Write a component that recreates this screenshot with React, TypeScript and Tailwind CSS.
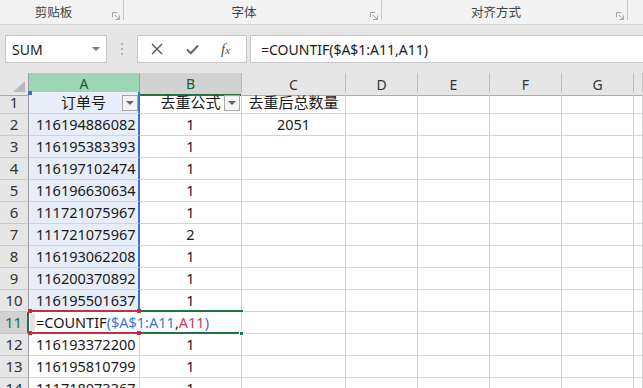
import React from "react";

const data: [string, string, string][] = [
  ["116194886082", "1", "2051"],
  ["116195383393", "1", ""],
  ["116197102474", "1", ""],
  ["116196630634", "1", ""],
  ["111721075967", "1", ""],
  ["111721075967", "2", ""],
  ["116193062208", "1", ""],
  ["116200370892", "1", ""],
  ["116195501637", "1", ""],
];

const after: [string, string][] = [
  ["116193372200", "1"],
  ["116195810799", "1"],
  ["111718073367", "1"],
];

const cols = "grid grid-cols-[29px_111px_102px_104px_72px_72px_72px_72px_1fr]";

const Launcher = () => (
  <svg width="8" height="8" viewBox="0 0 8 8" className="absolute right-[3px] bottom-[4px]" fill="none" stroke="#a3a3a3" strokeWidth="1">
    <path d="M0.5 5V0.5H5" />
    <path d="M2.5 2.5L7 7" />
    <path d="M7.5 3.5V7.5H3.5" />
  </svg>
);

const FilterBtn = ({ right }: { right: string }) => (
  <div className={`absolute top-[3px] ${right} w-[16px] h-[16px] border border-[#a6a6a6] bg-[#f3f3f3] flex items-center justify-center`}>
    <svg width="8" height="4" viewBox="0 0 8 4">
      <path d="M0 0H8L4 4Z" fill="#666" />
    </svg>
  </div>
);

const RowHead = ({ n, active }: { n: number; active?: boolean }) => (
  <div
    className={
      active
        ? "h-[22px] bg-[#d2d2d2] border-r-2 border-r-[#217346] border-b border-b-[#c6c6c6] flex items-center justify-center text-[15px] text-[#217346]"
        : "h-[22px] bg-[#e6e6e6] border-r border-r-[#9e9e9e] border-b border-b-[#c9c9c9] flex items-center justify-center text-[15px] text-[#333]"
    }
  >
    {n}
  </div>
);

const Blank = () => <div className="h-[22px] border-r border-b border-[#d4d4d4]" />;

export default function App() {
  return (
    <div className="w-[643px] h-[388px] overflow-hidden bg-white font-['Noto_Sans','Noto_Sans_CJK_SC',sans-serif] text-[#1a1a1a]">
      {/* ribbon group labels */}
      <div className="h-[25px] flex bg-[#f3f3f3] border-b border-[#d6d6d6] text-[12.5px] text-[#444]">
        <div className="relative w-[123px] flex items-center justify-center pr-[16px] pt-[3px]">
          剪贴板
          <Launcher />
        </div>
        <div className="w-px h-[20px] bg-[#c8c8c8]" />
        <div className="relative w-[257px] flex items-center justify-center pr-[17px] pt-[3px]">
          字体
          <Launcher />
        </div>
        <div className="w-px h-[20px] bg-[#c8c8c8]" />
        <div className="relative w-[245px] flex items-center justify-center pr-[17px] pt-[3px]">
          对齐方式
          <Launcher />
        </div>
        <div className="w-px h-[20px] bg-[#c8c8c8]" />
      </div>

      {/* formula bar */}
      <div className="h-[48px] bg-[#e6e6e6] flex items-start pt-[10px]">
        <div className="ml-[5px] w-[102px] h-[28px] bg-white border border-[#c6c6c6] flex items-center justify-between pl-[6px] pr-[6px] text-[14px]">
          <span>SUM</span>
          <svg width="8" height="4" viewBox="0 0 8 4">
            <path d="M0 0H8L4 4Z" fill="#7a7a7a" />
          </svg>
        </div>
        <div className="w-[30px] h-[28px] flex flex-col items-center justify-center gap-[3px]">
          <span className="w-[2px] h-[2px] bg-[#b0b0b0]" />
          <span className="w-[2px] h-[2px] bg-[#b0b0b0]" />
          <span className="w-[2px] h-[2px] bg-[#b0b0b0]" />
        </div>
        <div className="w-[110px] h-[28px] bg-white border border-[#c6c6c6] flex items-center">
          <svg width="12" height="12" viewBox="0 0 12 12" className="ml-[13px]" stroke="#555" strokeWidth="1.4">
            <path d="M1 1L11 11M11 1L1 11" />
          </svg>
          <svg width="13" height="11" viewBox="0 0 13 11" className="ml-[23px]" fill="none" stroke="#666" strokeWidth="2">
            <path d="M1 5.5L4.8 9.2L12 1.5" />
          </svg>
          <span className="ml-[22px] italic font-['Liberation_Serif',serif] text-[15px] text-[#555] leading-none">
            f<span className="text-[11px]">x</span>
          </span>
        </div>
        <div className="ml-[3px] flex-1 h-[28px] bg-white border border-[#c6c6c6] border-r-0 flex items-center pl-[10px] text-[14px]">
          =COUNTIF($A$1:A11,A11)
        </div>
      </div>

      {/* column headers */}
      <div className={`${cols} h-[19px]`}>
        <div className="relative bg-[#e6e6e6] border-r border-r-[#9e9e9e] border-b border-b-[#ababab]">
          <svg width="12" height="11" viewBox="0 0 12 11" className="absolute right-[3px] bottom-[3px]">
            <path d="M12 0V11H0Z" fill="#b9b9b9" />
          </svg>
        </div>
        <div className="bg-[#9fd5b7] border-r border-r-[#9e9e9e] border-b-2 border-b-[#217346] flex items-center justify-center text-[14px] text-[#1d5a37]">A</div>
        <div className="bg-[#d2d2d2] border-r border-r-[#b5b5b5] border-b-2 border-b-[#217346] flex items-center justify-center text-[14px] text-[#1d5a37]">B</div>
        {["C", "D", "E", "F", "G", ""].map((c, i) => (
          <div key={i} className="bg-[#e6e6e6] border-r border-r-[#c0c0c0] border-b border-b-[#ababab] flex items-center justify-center text-[14px] text-[#333]">
            {c}
          </div>
        ))}
      </div>

      {/* row 1 */}
      <div className={cols}>
        <RowHead n={1} />
        <div className="relative h-[22px] bg-[#e8eef9] border-r-2 border-r-[#3f71c8] border-b border-b-[#d4d4d4] flex items-center justify-center text-[15px]">
          <span className="absolute -left-[1px] -top-[1px] w-[4px] h-[4px] bg-[#3f71c8]" />
          订单号
          <FilterBtn right="right-0" />
        </div>
        <div className="relative h-[22px] border-r border-b border-[#d4d4d4] flex items-center justify-center text-[15px]">
          去重公式
          <FilterBtn right="right-[1px]" />
        </div>
        <div className="h-[22px] border-r border-b border-[#d4d4d4] flex items-center justify-center text-[15px]">去重后总数量</div>
        <Blank />
        <Blank />
        <Blank />
        <Blank />
        <Blank />
      </div>

      {data.map((r, i) => (
        <div key={i} className={cols}>
          <RowHead n={i + 2} />
          <div className="h-[22px] bg-[#e8eef9] border-r-2 border-r-[#3f71c8] border-b border-b-[#d4d4d4] flex items-center pl-[7px] text-[14.5px]">
            {r[0]}
          </div>
          <div className="h-[22px] border-r border-b border-[#d4d4d4] flex items-center justify-center text-[14.5px]">{r[1]}</div>
          <div className="h-[22px] border-r border-b border-[#d4d4d4] flex items-center justify-center text-[14.5px]">{r[2]}</div>
          <Blank />
          <Blank />
          <Blank />
          <Blank />
          <Blank />
        </div>
      ))}

      {/* row 11 - editing */}
      <div className={cols}>
        <RowHead n={11} active />
        <div className="relative col-span-2 h-[22px] border-r border-b border-[#d4d4d4] flex items-center pl-[7px] text-[14.5px]">
          <span className="absolute left-[1px] top-[2px] w-[5px] h-[17px] bg-[#ecdfe5]" />
          <span className="relative">
            =COUNTIF<span className="text-[#3b78d6]">($A$1:A11</span>,<span className="text-[#d23a52]">A11</span>
            <span className="text-[#5a5ec9]">)</span>
          </span>
          <span className="absolute left-0 -top-[2px] w-[111px] h-[2px] bg-[#c0313f]" />
          <span className="absolute left-0 bottom-[-1px] w-[111px] h-[2px] bg-[#c0313f]" />
          <span className="absolute -left-[1px] -top-[3px] w-[4px] h-[4px] bg-[#c0313f]" />
          <span className="absolute left-[108px] -top-[3px] w-[4px] h-[4px] bg-[#c0313f]" />
          <span className="absolute -left-[1px] bottom-[-2px] w-[4px] h-[4px] bg-[#c0313f]" />
          <span className="absolute left-[108px] bottom-[-2px] w-[4px] h-[4px] bg-[#c0313f]" />
          <span className="absolute left-[112px] -top-[2px] w-[102px] h-[2px] bg-[#217346]" />
          <span className="absolute left-[112px] bottom-[-1px] w-[100px] h-[2px] bg-[#217346]" />
          <span className="absolute left-[210px] bottom-[-3px] w-[5px] h-[5px] bg-[#217346] border border-white" />
        </div>
        <Blank />
        <Blank />
        <Blank />
        <Blank />
        <Blank />
        <Blank />
      </div>

      {after.map((r, i) => (
        <div key={i} className={cols}>
          <RowHead n={i + 12} />
          <div className="h-[22px] border-r border-b border-[#d4d4d4] flex items-center pl-[7px] text-[14.5px]">{r[0]}</div>
          <div className="h-[22px] border-r border-b border-[#d4d4d4] flex items-center justify-center text-[14.5px]">{r[1]}</div>
          <Blank />
          <Blank />
          <Blank />
          <Blank />
          <Blank />
          <Blank />
        </div>
      ))}
    </div>
  );
}
